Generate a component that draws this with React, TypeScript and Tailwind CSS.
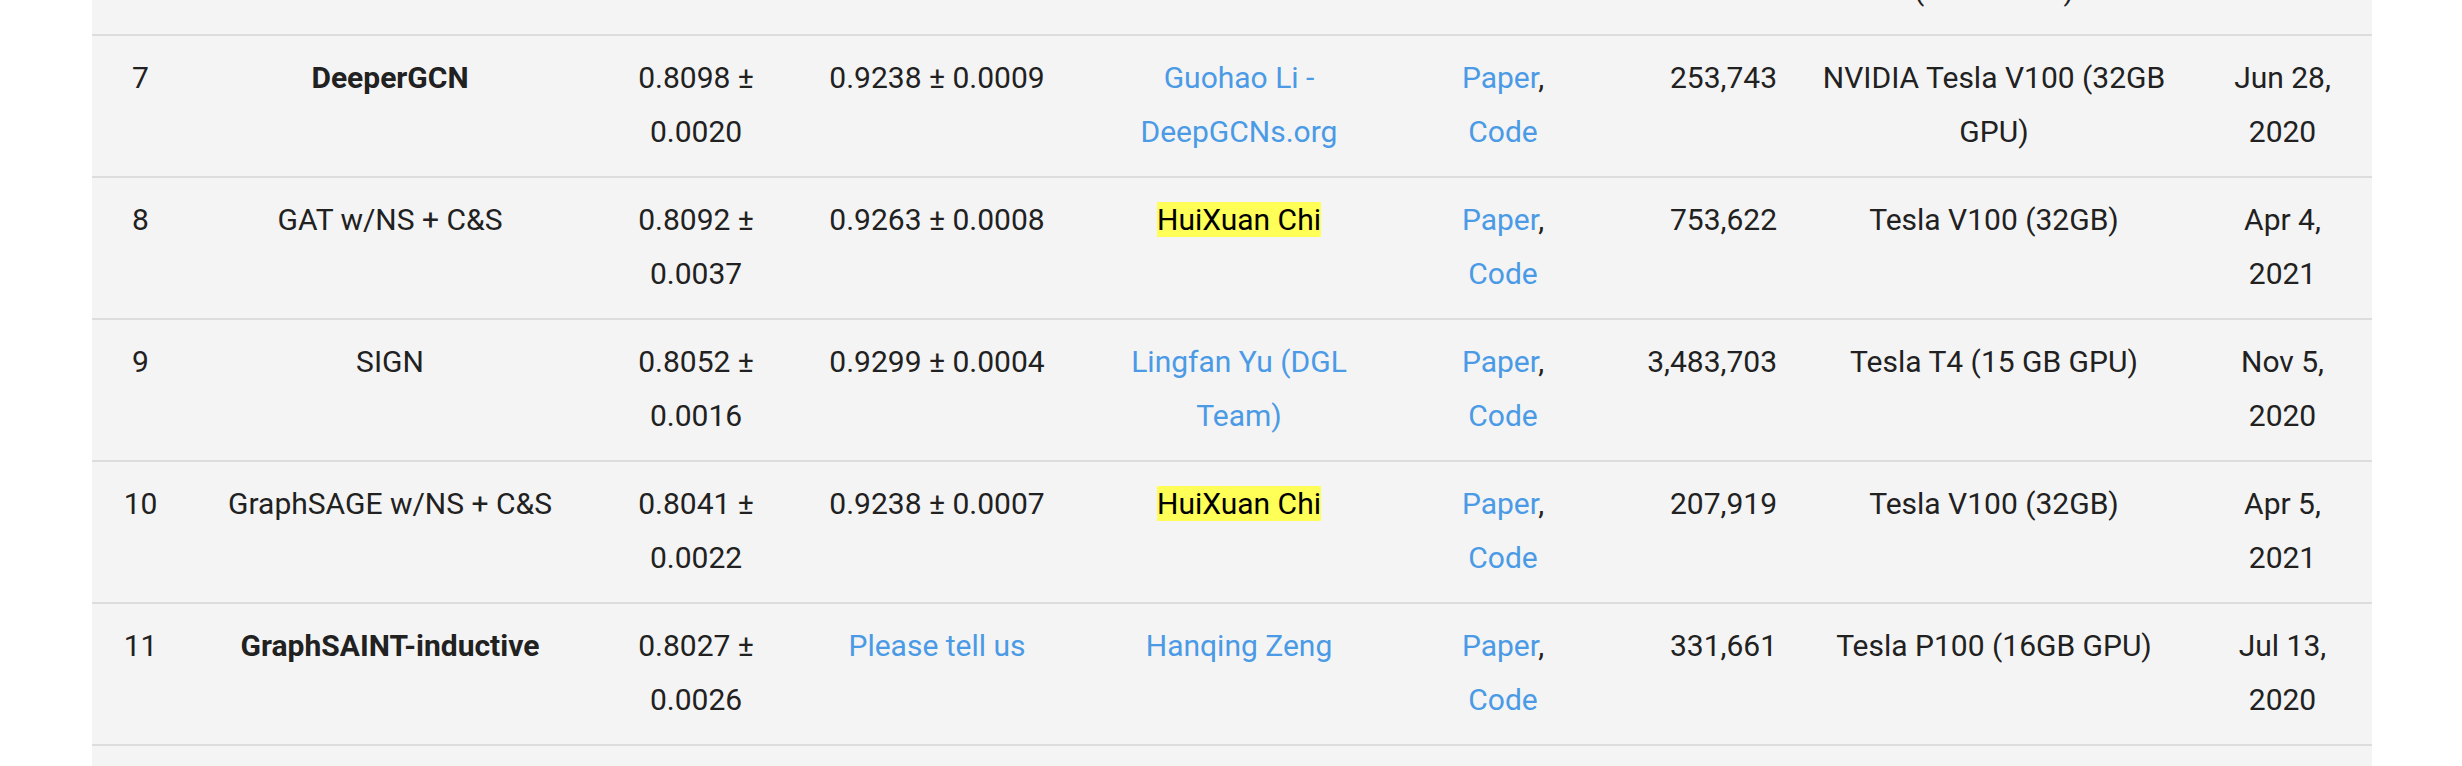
type Row = {
  rank: number;
  method: string;
  bold?: boolean;
  test: string;
  valid: string;
  validAsk?: boolean;
  contact: string;
  highlight?: boolean;
  params: string;
  hardware: string;
  date: string;
};

const rows: Row[] = [
  {
    rank: 6,
    method: "UniMP",
    test: "0.8256 ± 0.0031",
    valid: "0.9308 ± 0.0017",
    contact: "Yunsheng Shi",
    params: "1,475,605",
    hardware: "NVIDIA Tesla V100 SXM2 (32GB GPU)",
    date: "Sep 8, 2020",
  },
  {
    rank: 7,
    method: "DeeperGCN",
    bold: true,
    test: "0.8098 ± 0.0020",
    valid: "0.9238 ± 0.0009",
    contact: "Guohao Li - DeepGCNs.org",
    params: "253,743",
    hardware: "NVIDIA Tesla V100 (32GB GPU)",
    date: "Jun 28, 2020",
  },
  {
    rank: 8,
    method: "GAT w/NS + C&S",
    test: "0.8092 ± 0.0037",
    valid: "0.9263 ± 0.0008",
    contact: "HuiXuan Chi",
    highlight: true,
    params: "753,622",
    hardware: "Tesla V100 (32GB)",
    date: "Apr 4, 2021",
  },
  {
    rank: 9,
    method: "SIGN",
    test: "0.8052 ± 0.0016",
    valid: "0.9299 ± 0.0004",
    contact: "Lingfan Yu (DGL Team)",
    params: "3,483,703",
    hardware: "Tesla T4 (15 GB GPU)",
    date: "Nov 5, 2020",
  },
  {
    rank: 10,
    method: "GraphSAGE w/NS + C&S",
    test: "0.8041 ± 0.0022",
    valid: "0.9238 ± 0.0007",
    contact: "HuiXuan Chi",
    highlight: true,
    params: "207,919",
    hardware: "Tesla V100 (32GB)",
    date: "Apr 5, 2021",
  },
  {
    rank: 11,
    method: "GraphSAINT-inductive",
    bold: true,
    test: "0.8027 ± 0.0026",
    valid: "Please tell us",
    validAsk: true,
    contact: "Hanqing Zeng",
    params: "331,661",
    hardware: "Tesla P100 (16GB GPU)",
    date: "Jul 13, 2020",
  },
  {
    rank: 12,
    method: "Cluster-GCN",
    test: "0.7897 ± 0.0033",
    valid: "0.9212 ± 0.0009",
    contact: "Matthias Fey",
    params: "206,895",
    hardware: "GeForce RTX 2080 (11GB GPU)",
    date: "Jun 10, 2020",
  },
];

const link = "text-[#4a9ae6] no-underline";
const cell = "px-6 pt-[15px] pb-[17px] text-center align-top";

function LeaderRow({ row }: { row: Row }) {
  return (
    <tr className="border-b-2 border-[#dddddd]">
      <td className={cell}>{row.rank}</td>
      <td className={`${cell} ${row.bold ? "font-bold" : ""}`}>{row.method}</td>
      <td className={cell}>{row.test}</td>
      <td className={cell}>
        {row.validAsk ? <a className={link}>{row.valid}</a> : row.valid}
      </td>
      <td className={cell}>
        {row.highlight ? (
          <mark className="bg-[#ffff57] text-black">{row.contact}</mark>
        ) : (
          <a className={link}>{row.contact}</a>
        )}
      </td>
      <td className={cell}>
        <a className={link}>Paper</a>, <a className={link}>Code</a>
      </td>
      <td className="pl-6 pr-[18px] pt-[15px] pb-[17px] text-right align-top">{row.params}</td>
      <td className={cell}>{row.hardware}</td>
      <td className={cell}>{row.date}</td>
    </tr>
  );
}

export default function App() {
  return (
    <div className="h-[766px] w-[2462px] overflow-hidden bg-white font-['Roboto',sans-serif] text-[30px] leading-[54px] text-[#212121]">
      <table className="-mt-[106px] ml-[92px] w-[2280px] table-fixed bg-[#f4f4f4]">
        <colgroup>
          <col className="w-[97px]" />
          <col className="w-[402px]" />
          <col className="w-[210px]" />
          <col className="w-[272px]" />
          <col className="w-[332px]" />
          <col className="w-[196px]" />
          <col className="w-[194px]" />
          <col className="w-[398px]" />
          <col className="w-[179px]" />
        </colgroup>
        <tbody>
          {rows.map(r => (
            <LeaderRow key={r.rank} row={r} />
          ))}
        </tbody>
      </table>
    </div>
  );
}
